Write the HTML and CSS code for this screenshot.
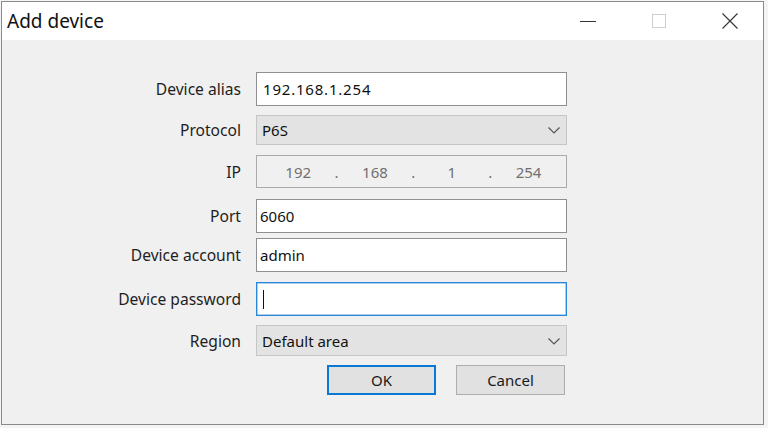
FILE: index.html
```html
<!DOCTYPE html>
<html>
<head>
<meta charset="utf-8">
<title>Add device</title>
<link rel="stylesheet" href="styles.css">
</head>
<body>
<div class="window">
  <div class="titlebar">
    <div class="title">Add device</div>
    <div class="controls">
      <svg class="ctl" width="16" height="16" viewBox="0 0 16 16"><line x1="0" y1="8.5" x2="16" y2="8.5" stroke="#333" stroke-width="1"/></svg>
      <svg class="ctl" width="16" height="16" viewBox="0 0 16 16"><rect x="1.5" y="1.5" width="13" height="13" fill="none" stroke="#cfcfcf" stroke-width="1"/></svg>
      <svg class="ctl" width="16" height="16" viewBox="0 0 16 16"><path d="M0.5 0.5 L15.5 15.5 M15.5 0.5 L0.5 15.5" stroke="#333" stroke-width="1.1" fill="none"/></svg>
    </div>
  </div>
  <div class="content">
    <div class="row r-alias">
      <div class="label">Device alias</div>
      <div class="field text-input"><span class="alias">192.168.1.254</span></div>
    </div>
    <div class="row r-protocol">
      <div class="label">Protocol</div>
      <div class="field select"><span>P6S</span>
        <svg width="12" height="7" viewBox="0 0 12 7"><path d="M0.5 0.5 L6 6 L11.5 0.5" fill="none" stroke="#555" stroke-width="1.2"/></svg>
      </div>
    </div>
    <div class="row r-ip">
      <div class="label">IP</div>
      <div class="field ip">
        <span>192</span><span>.</span><span>168</span><span>.</span><span>1</span><span>.</span><span>254</span>
      </div>
    </div>
    <div class="row r-port">
      <div class="label">Port</div>
      <div class="field text-input"><span>6060</span></div>
    </div>
    <div class="row r-account">
      <div class="label">Device account</div>
      <div class="field text-input"><span>admin</span></div>
    </div>
    <div class="row r-password">
      <div class="label">Device password</div>
      <div class="field text-input focused"><span class="caret"></span></div>
    </div>
    <div class="row r-region">
      <div class="label">Region</div>
      <div class="field select"><span>Default area</span>
        <svg width="12" height="7" viewBox="0 0 12 7"><path d="M0.5 0.5 L6 6 L11.5 0.5" fill="none" stroke="#555" stroke-width="1.2"/></svg>
      </div>
    </div>
    <div class="buttons">
      <div class="btn default">OK</div>
      <div class="btn">Cancel</div>
    </div>
  </div>
</div>
</body>
</html>
```
FILE: styles.css
```css
html, body {
  margin: 0;
  padding: 0;
}
body {
  background: #f4f4f4;
  font-family: "Noto Sans", "Liberation Sans", sans-serif;
  color: #1a1a1a;
  width: 768px;
  height: 428px;
  overflow: hidden;
}
.window {
  box-sizing: border-box;
  margin: 1px 0 0 1px;
  width: 763px;
  height: 424px;
  border: 1px solid #8a8a8a;
  background: #f0f0f0;
  display: flex;
  flex-direction: column;
}
.titlebar {
  height: 38px;
  background: #ffffff;
  display: flex;
  align-items: center;
  justify-content: space-between;
  flex-shrink: 0;
}
.title {
  font-size: 19px;
  padding-left: 5px;
  color: #111;
  margin-top: -1px;
}
.controls {
  display: flex;
  align-items: center;
  gap: 55px;
  padding-right: 25px;
  margin-top: -1px;
}
.ctl {
  display: block;
}
.content {
  display: flex;
  flex-direction: column;
  padding-top: 32px;
}
.row {
  display: flex;
  align-items: center;
}
.label {
  width: 239px;
  padding-right: 15px;
  box-sizing: content-box;
  text-align: right;
  font-size: 15.6px;
  color: #1e1e1e;
}
.field {
  box-sizing: border-box;
  width: 311px;
  height: 100%;
  display: flex;
  align-items: center;
  font-size: 15px;
  color: #111;
}
.text-input {
  background: #ffffff;
  border: 1px solid #8f8f8f;
  padding-left: 3px;
}
.text-input.focused {
  border: 1px solid #2a86d6;
  box-shadow: inset 0 0 0 0.5px #5aa3e0;
}
.alias {
  letter-spacing: 0.8px;
  padding-left: 3px;
}
.caret {
  display: block;
  width: 0;
  height: 19px;
  border-left: 1px solid #111;
  margin-left: 3px;
}
.select {
  background: #e3e3e3;
  border: 1px solid #c6c6c6;
  justify-content: space-between;
  padding: 0 6px 0 5px;
}
.select svg {
  display: block;
  margin-top: 1px;
}
.ip {
  background: #f0f0f0;
  border: 1px solid #aaaaaa;
  padding-left: 22px;
  color: #707070;
}
.ip span {
  width: 38.4px;
  text-align: center;
}
.r-alias { height: 34px; }
.r-protocol { height: 30px; margin-top: 9px; }
.r-ip { height: 33px; margin-top: 10px; }
.r-port { height: 34px; margin-top: 11px; }
.r-account { height: 34px; margin-top: 5px; }
.r-password { height: 34px; margin-top: 10px; }
.r-region { height: 31px; margin-top: 9px; }
.buttons {
  display: flex;
  gap: 20px;
  margin-top: 9px;
  padding-left: 325px;
}
.btn {
  box-sizing: border-box;
  width: 109px;
  height: 30px;
  background: #e1e1e1;
  border: 1px solid #adadad;
  display: flex;
  align-items: center;
  justify-content: center;
  font-size: 15px;
  color: #1a1a1a;
}
.btn.default {
  border: 2px solid #0a78d4;
}
```
